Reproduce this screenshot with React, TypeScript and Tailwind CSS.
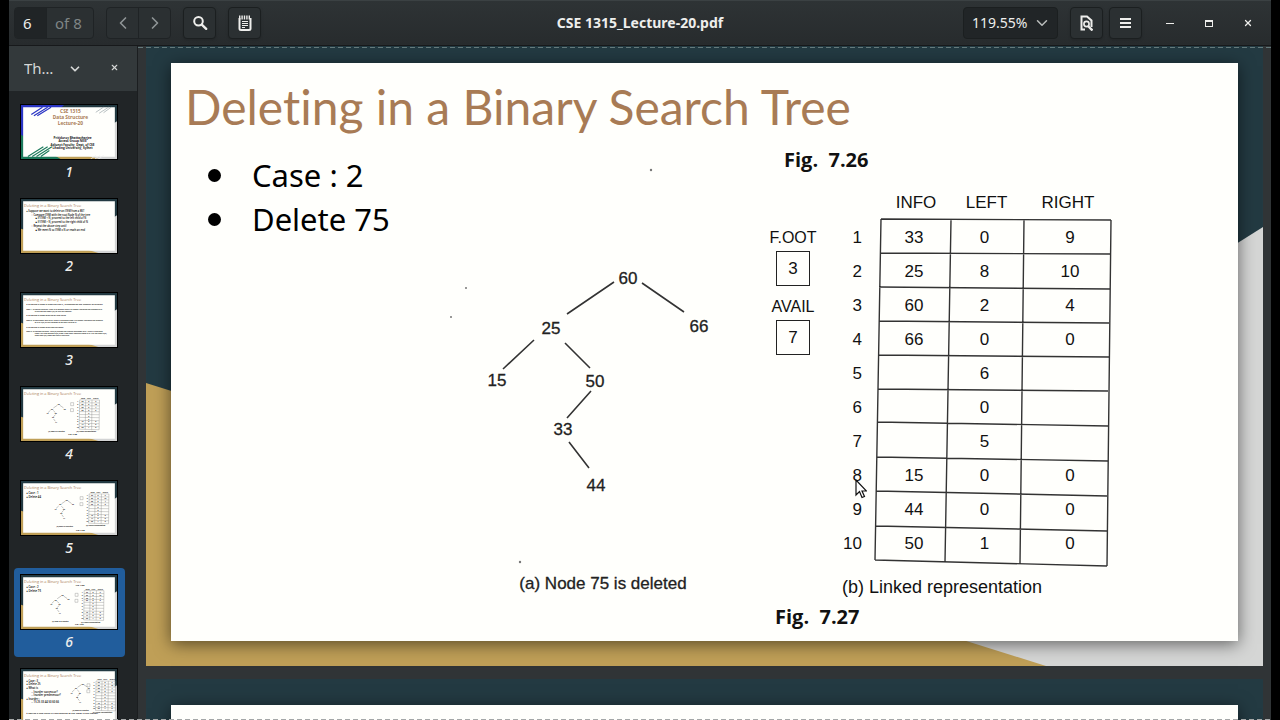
import type { ReactNode } from 'react';
import { ChevronDown, ChevronLeft, ChevronRight, X } from 'lucide-react';

const memory = [
  ['33', '0', '9'],
  ['25', '8', '10'],
  ['60', '2', '4'],
  ['66', '0', '0'],
  ['', '6', ''],
  ['', '0', ''],
  ['', '5', ''],
  ['15', '0', '0'],
  ['44', '0', '0'],
  ['50', '1', '0'],
];

const treeNodes = [
  { x: 188, y: 35, label: '60' },
  { x: 111, y: 85, label: '25' },
  { x: 259, y: 83, label: '66' },
  { x: 57, y: 137, label: '15' },
  { x: 155, y: 138, label: '50' },
  { x: 123, y: 186, label: '33' },
  { x: 156, y: 242, label: '44' },
];

const treeEdges = 'M174 32 127 64M202 33 244 62M94 90 63 119M125 93 150 118M151 141 127 168M129 192 149 218';

// grid lines of the scanned table, which leans a little to the left
const gridLines =
  'M43 0 37 341M113 1 107 343M186 1 182 345M273 1 269 347' +
  'M43 0 273 1M42 34 272 35M41 68 272 70M41 102 271 104M40 136 271 138M40 170 270 172' +
  'M39 203 270 207M39 238 270 242M38 272 269 277M38 307 269 312M37 341 269 347';

const TITLE = 'Deleting in a Binary Search Tree';

/* ---------- Toolbar ---------- */

function ToolButton({ label, children }: { label: string; children: ReactNode }) {
  return (
    <button
      aria-label={label}
      className="flex h-8 w-[33px] items-center justify-center rounded-sm border border-[#1b1f20] bg-[#2b3032] text-[#eeeeec] shadow-sm hover:bg-[#353a3c]"
    >
      {children}
    </button>
  );
}

function Toolbar() {
  return (
    <header className="relative flex h-[46px] shrink-0 items-center justify-between border-t border-b border-t-[#3b4143] border-b-[#17191b] bg-gradient-to-b from-[#2e3335] to-[#272b2d] pr-0.5 pl-[5px]">
      <div className="flex items-center gap-3">
        <label className="flex h-8 w-20 items-center overflow-hidden rounded-sm border border-[#1f2325] bg-[#2b3032] text-[15px] text-[#7f8586]">
          <input
            aria-label="Page"
            defaultValue="6"
            className="h-full w-8 border-r border-[#1f2325] bg-[#202426] pl-2 text-[#eeeeec] outline-none"
          />
          <span className="pl-2">of 8</span>
        </label>
        <div className="flex h-8 w-[65px] rounded-sm border border-[#1f2325] bg-[#2b3032] text-[#8f9596]">
          <button aria-label="Previous page" className="flex flex-1 items-center justify-center border-r border-[#1f2325]">
            <ChevronLeft size={20} />
          </button>
          <button aria-label="Next page" className="flex flex-1 items-center justify-center">
            <ChevronRight size={20} />
          </button>
        </div>
        <ToolButton label="Find">
          <svg width="16" height="16" viewBox="0 0 16 16" fill="none" stroke="currentColor">
            <circle cx="6.5" cy="6.3" r="4.3" strokeWidth="2" />
            <path d="m9.8 9.6 4.4 4.2" strokeWidth="2.4" strokeLinecap="round" />
          </svg>
        </ToolButton>
        <ToolButton label="Annotate">
          <svg width="14" height="16" viewBox="0 0 14 16" fill="none" stroke="currentColor">
            <path d="M1.5 3v10.500q0 1.500 1.500 1.500h8q1.500 0 1.500-1.500V3" strokeWidth="2" />
            <path d="M1 2.500h12" strokeWidth="4" strokeDasharray="1.400 1" />
            <path d="M4 6.500h6M4 8.500h6M4 10.500h6M4 12.500h3" strokeWidth="1" />
          </svg>
        </ToolButton>
      </div>

      <h1 className="pointer-events-none absolute inset-x-0 text-center text-sm font-bold text-[#eeeeec]">
        CSE 1315_Lecture-20.pdf
      </h1>

      <div className="flex items-center text-[#eeeeec]">
        <div className="relative mr-3 h-8 w-[95px]">
          <select
            aria-label="Zoom"
            className="h-full w-full appearance-none rounded-sm border border-[#1b1f20] bg-[#212527] pl-2 text-sm outline-none"
          >
            <option>119.55%</option>
          </select>
          <ChevronDown size={18} className="pointer-events-none absolute top-[7px] right-[7px] text-[#b9bcbb]" />
        </div>
        <ToolButton label="Document properties">
          <svg width="13" height="16" viewBox="0 0 13 16" fill="none" stroke="currentColor">
            <path d="M5 14.500H1.500V1.500H7L11.500 5.500V12" strokeWidth="2" />
            <circle cx="6.500" cy="9" r="2.600" strokeWidth="1.600" />
            <path d="m8 11 4.500 4.500" strokeWidth="2.400" />
          </svg>
        </ToolButton>
        <div className="w-1.5" />
        <ToolButton label="Menu">
          <svg width="11" height="11" viewBox="0 0 11 11" fill="currentColor">
            <path d="M0 0h11v2H0zM0 4h11v2H0zM0 8h11v2H0z" />
          </svg>
        </ToolButton>
        <div className="ml-2.5 flex">
          <button aria-label="Minimize" className="flex h-8 w-[39px] items-center justify-center pr-1">
            <span className="h-px w-2 bg-current" />
          </button>
          <button aria-label="Maximize" className="flex h-8 w-[39px] items-center justify-center pr-1">
            <span className="h-[7px] w-2 border border-t-2 border-current" />
          </button>
          <button aria-label="Close" className="flex h-8 w-[39px] items-center justify-center pr-1">
            <X size={10} strokeWidth={3} />
          </button>
        </div>
      </div>
    </header>
  );
}

/* ---------- Thumbnails ---------- */

function MiniTree({ transform }: { transform: string }) {
  return (
    <g transform={transform}>
      <path d={treeEdges} fill="none" stroke="#555" strokeWidth="4" />
      {treeNodes.map((n) => (
        <text key={n.label} x={n.x} y={n.y} fontSize="20" fontWeight="bold" textAnchor="middle">{n.label}</text>
      ))}
      <text x="163" y="340" fontSize="18" fontWeight="bold" textAnchor="middle">(a) Node 75 is deleted</text>
    </g>
  );
}

function MiniTable({ transform }: { transform: string }) {
  return (
    <g transform={transform} fontSize="20" fontWeight="bold">
      <path d={gridLines} fill="none" stroke="#777" strokeWidth="4" />
      <path d="M-62 32h34v35h-34zM-64 102h34v34h-34z" fill="none" stroke="#777" strokeWidth="4" />
      <text x="58" y="-10">INFO</text>
      <text x="128" y="-10">LEFT</text>
      <text x="202" y="-10">RIGHT</text>
      {memory.map((row, i) => (
        <g key={i} textAnchor="middle">
          <text x="20" y={25 + i * 34}>{i + 1}</text>
          <text x="75" y={25 + i * 34}>{row[0]}</text>
          <text x="147" y={25 + i * 34}>{row[1]}</text>
          <text x="230" y={25 + i * 34}>{row[2]}</text>
        </g>
      ))}
      <text x="5" y="375" fontSize="18">(b) Linked representation</text>
    </g>
  );
}

function MiniLines({ lines, size, gap, y }: { lines: [number, string][]; size: number; gap: number; y: number }) {
  return (
    <>
      {lines.map(([x, text], i) => (
        <text key={i} x={x} y={y + i * gap} fontSize={size} fontWeight="600">{text}</text>
      ))}
    </>
  );
}

function Cover() {
  return (
    <>
      <path d="M0 0h500L0 500z" fill="#2a35c4" />
      <path d="M0 345v283h460z" fill="#1c7a5c" />
      <path d="M25 25h1067v578H25z" fill="#fffffc" />
      <path d="m120 110 130-85M150 125l160-100M190 125l160-100" stroke="#2a35c4" strokeWidth="14" />
      <path d="m870 85 90-60M910 95l110-70M960 90l90-65" stroke="#8b979c" strokeWidth="7" />
      <path d="m80 600 180-115M130 600l180-115M180 600l180-115M230 600l100-70" stroke="#1c7a5c" strokeWidth="13" />
      <path d="m810 628 60-40M860 628l60-40M900 628l60-40" stroke="#eee" strokeWidth="9" />
      <g textAnchor="middle" fontWeight="bold" fill="#a87b55" fontSize="56">
        <text x="575" y="92">CSE 1315</text>
        <text x="575" y="165">Data Structure</text>
        <text x="575" y="235">Lecture-20</text>
      </g>
      <g textAnchor="middle" fontWeight="bold" fill="#222" fontSize="36">
        <text x="600" y="395">Pritidoroy Bhattacharjee</text>
        <text x="600" y="435">Access Group NEIE</text>
        <text x="600" y="473">Adjunct Faculty, Dept. of CSE</text>
        <text x="600" y="513">Leading University, Sylhet</text>
      </g>
    </>
  );
}

function thumbContent(page: number) {
  switch (page) {
    case 2:
      return (
        <MiniLines
          size={29}
          gap={44}
          y={150}
          lines={[
            [60, '●  Suppose we want to delete an ITEM from a BST'],
            [120, '○  Compare ITEM with the root Node N of the tree'],
            [170, '■  If ITEM < N, proceed to the left child of N'],
            [170, '■  If ITEM > N, proceed to the right child of N'],
            [120, '○  Repeat the above step until'],
            [170, '■  We meet N so ITEM = N or reach an end'],
          ]}
        />
      );
    case 3:
      return (
        <>
          <MiniLines
            size={25}
            gap={132}
            y={138}
            lines={[
              [60, '●  To delete a node N from the tree T, it depends on the number of children'],
              [60, '●  To delete a node with no or one child'],
              [60, '●  To delete a node with two children'],
            ]}
          />
          <MiniLines
            size={21}
            gap={24}
            y={200}
            lines={[
              [60, 'Case 1.   N has no children. Then N is deleted from T by simply replacing the location of N'],
              [160, 'in the parent node P(N) by the null pointer.'],
            ]}
          />
          <MiniLines
            size={21}
            gap={24}
            y={320}
            lines={[
              [60, 'Case 2.   N has exactly one child. Then N is deleted from T by simply replacing the location'],
              [160, 'of N in P(N) by the location of the only child of N.'],
            ]}
          />
          <MiniLines
            size={21}
            gap={24}
            y={455}
            lines={[
              [60, 'Case 3.   N has two children. Let S(N) denote the inorder successor of N. Then N is deleted'],
              [160, 'from T by first deleting S(N) from T and then replacing node N in T by the node S(N).'],
              [160, 'Note that S(N) does not have a left child.'],
            ]}
          />
        </>
      );
    case 4:
      return (
        <>
          <MiniTree transform="translate(250 180)" />
          <MiniTable transform="translate(640 150)" />
          <text x="550" y="560" fontSize="26" fontWeight="bold">Fig. 7.25</text>
        </>
      );
    case 5:
      return (
        <>
          <MiniLines size={32} gap={44} y={148} lines={[[60, '●   Case : 1'], [60, '●   Delete 44']]} />
          <MiniTree transform="translate(345 200)" />
          <MiniTable transform="translate(750 150)" />
          <text x="640" y="585" fontSize="26" fontWeight="bold">Fig. 7.26</text>
        </>
      );
    case 6:
      return (
        <>
          <MiniLines size={32} gap={44} y={148} lines={[[60, '●   Case : 2'], [60, '●   Delete 75']]} />
          <text x="638" y="130" fontSize="26" fontWeight="bold">Fig. 7.26</text>
          <MiniTree transform="translate(294 212)" />
          <MiniTable transform="translate(692 181)" />
          <text x="629" y="586" fontSize="26" fontWeight="bold">Fig. 7.27</text>
        </>
      );
    default:
      return (
        <>
          <MiniLines
            size={31}
            gap={42}
            y={148}
            lines={[
              [60, '●   Case : 3'],
              [60, '●   Delete 25'],
              [60, '●   What is'],
              [120, '○   Inorder successor?'],
              [120, '○   Inorder predecessor?'],
              [60, '●   Inorder :'],
              [120, '○   15 25 33 44 50 60 66'],
            ]}
          />
          <text x="60" y="525" fontSize="27" fontWeight="600">●   Storing a new value in right subtree of any Node in the Inorder</text>
          <MiniTree transform="translate(530 150)" />
          <MiniTable transform="translate(830 140)" />
        </>
      );
  }
}

function Thumbnail({ page, selected }: { page: number; selected: boolean }) {
  return (
    <button
      aria-current={selected ? 'page' : undefined}
      className={`flex h-[89px] w-[111px] shrink-0 flex-col items-center rounded-sm pt-1.5 pr-px ${selected ? 'bg-[#215d9c]' : ''}`}
    >
      <svg viewBox="0 0 1117 628" className="h-14 w-[98px] border border-black font-['Open_Sans',sans-serif]">
        <path d="M0 0h1117v628H0z" fill="#233a42" />
        <path d="M1117 189v439H428z" fill="#d3d4d4" />
        <path d="M0 345v283h900z" fill="#bf9f57" />
        {page === 1 ? (
          <Cover />
        ) : (
          <>
            <path d="M25 25h1067v578H25z" fill="#fffffc" />
            <text x="36" y="88" fontSize="45" fontWeight="500" fill="#a87b55">{TITLE}</text>
            {thumbContent(page)}
          </>
        )}
      </svg>
      <span className="text-sm leading-6 font-medium text-[#eeeeec] italic">{page}</span>
    </button>
  );
}

function Sidebar() {
  return (
    <aside className="flex w-[129px] shrink-0 flex-col border-r border-[#1b1e20] bg-[#212527]">
      <div className="flex h-[45px] shrink-0 items-center bg-[#33393b] pb-0.5 pl-[15px] text-[#d5d7d6]">
        <div className="relative w-[62px]">
          <select aria-label="Sidebar view" className="w-full appearance-none bg-transparent text-[15px] outline-none">
            <option>Th…</option>
          </select>
          <ChevronDown size={14} strokeWidth={3} className="pointer-events-none absolute top-1.5 right-1" />
        </div>
        <button aria-label="Close sidebar" className="ml-5 flex h-6 w-4 items-center justify-center">
          <X size={9} strokeWidth={3} />
        </button>
      </div>
      <nav className="flex min-h-0 flex-1 flex-col gap-[5px] overflow-hidden pt-[7px] pl-[5px]">
        {[1, 2, 3, 4, 5, 6, 7].map((page) => (
          <Thumbnail key={page} page={page} selected={page === 6} />
        ))}
      </nav>
    </aside>
  );
}

/* ---------- Document ---------- */

function TreeFigure() {
  return (
    <svg width="300" height="450" viewBox="0 0 300 450" className="mt-[17px] shrink-0">
      <path d={treeEdges} transform="translate(0 100)" fill="none" stroke="#333" strokeWidth="1.600" />
      <g textAnchor="middle" fontSize="17" fill="#222" stroke="#222" strokeWidth="0.300">
        {treeNodes.map((n) => (
          <text key={n.label} x={n.x} y={n.y + 99}>{n.label}</text>
        ))}
        <text x="163" y="439">(a) Node 75 is deleted</text>
      </g>
      {/* scanner dust */}
      <g fill="#777">
        <circle cx="211" cy="20" r="1.200" />
        <circle cx="26" cy="138" r="1" />
        <circle cx="11" cy="167" r="1" />
        <circle cx="80" cy="412" r="1.200" />
      </g>
    </svg>
  );
}

function Pointer({ name, value }: { name: string; value: string }) {
  return (
    <div className="flex flex-col items-center">
      <span className="mb-[3px] text-base leading-5">{name}</span>
      <span className="flex h-[35px] w-[34px] items-center justify-center border border-[#222]">{value}</span>
    </div>
  );
}

function LinkedTable() {
  return (
    <div className="relative ml-[15px]">
      <svg width="271" height="350" viewBox="0 0 271 350" className="pointer-events-none absolute top-8 left-0 overflow-visible">
        <path d={gridLines} fill="none" stroke="#333" strokeWidth="1.400" />
      </svg>
      <table className="w-[271px] table-fixed text-center">
        <thead>
          <tr className="h-8">
            <th className="w-10" />
            <th className="w-[72px] p-0 pl-1 text-center font-normal">INFO</th>
            <th className="w-[73px] p-0 text-center font-normal">LEFT</th>
            <th className="w-[86px] p-0 pl-1 text-center font-normal">RIGHT</th>
          </tr>
        </thead>
        <tbody>
          {memory.map((row, i) => (
            <tr key={i} className="h-[34px]">
              <td className="pt-1 pr-4 pb-0 pl-0 text-right">{i + 1}</td>
              <td className="p-0 pt-1">{row[0]}</td>
              <td className="p-0 pt-1 pr-1">{row[1]}</td>
              <td className="p-0 pt-1 pl-2">{row[2]}</td>
            </tr>
          ))}
        </tbody>
      </table>
      <svg width="12" height="20" viewBox="0 0 12 20" className="absolute top-[292px] left-[17px]">
        <path d="M1 1v15l3.500-3.500 2.500 6 2.500-1-2.500-5.500h4.500z" fill="#fff" stroke="#111" strokeWidth="1.200" />
      </svg>
    </div>
  );
}

function LinkedFigure() {
  return (
    <figure className="w-[400px] shrink-0 pt-[15px]">
      <p className="pl-11 font-['Open_Sans',sans-serif] text-xl leading-6 font-bold">Fig.&nbsp; 7.26</p>
      <div className="mt-[15px] flex pl-[23px]">
        <div className="flex w-[60px] flex-col gap-[11px] pt-[41px]">
          <Pointer name="F.OOT" value="3" />
          <Pointer name="AVAIL" value="7" />
        </div>
        <LinkedTable />
      </div>
      <figcaption className="mt-4 pl-[102px] text-lg leading-6">(b) Linked representation</figcaption>
      <p className="mt-1.5 pl-[35px] font-['Open_Sans',sans-serif] text-xl leading-6 font-bold">Fig.&nbsp; 7.27</p>
    </figure>
  );
}

function Viewer() {
  return (
    <main className="relative min-w-0 flex-1 overflow-hidden bg-[#303436] px-2">
      <section className="relative px-[25px] pt-[17px] pb-[25px]">
        <svg viewBox="0 0 1117 620" preserveAspectRatio="none" className="absolute inset-0 h-full w-full">
          <path d="M0 0h1117v620H0z" fill="#233a42" />
          <path d="M1117 181v439H420z" fill="#d5d6d5" />
          <path d="M0 337v283h900z" fill="#bf9f57" />
        </svg>
        <article className="relative min-h-[578px] bg-[#fffffc] pt-[18px] shadow-[0_3px_16px_rgba(0,0,0,0.55)]">
          <h2 className="pl-3.5 font-[Lato,sans-serif] text-5xl leading-[52px] text-[#a87b55] [font-variant-ligatures:none]">
            {TITLE}
          </h2>
          <div className="flex font-['Liberation_Sans',Arial,sans-serif] text-[17px] text-[#111]">
            <ul className="min-w-0 flex-1 pt-5 pl-[37px] font-['Noto_Sans',sans-serif] text-[31px] leading-[44px] text-black">
              {['Case : 2', 'Delete 75'].map((item) => (
                <li key={item} className="flex items-center whitespace-nowrap">
                  <span className="mr-[31px] size-[13px] rounded-full bg-black" />
                  {item}
                </li>
              ))}
            </ul>
            <TreeFigure />
            <LinkedFigure />
            <div className="w-[98px] shrink-0" />
          </div>
        </article>
      </section>
      <section className="mt-[13px] h-[628px] bg-[#233a42] px-[25px] pt-[26px]">
        <div className="h-[578px] bg-[#fffffc] shadow-[0_3px_16px_rgba(0,0,0,0.55)]" />
      </section>
      <div className="absolute inset-x-0 top-px h-px bg-[repeating-linear-gradient(90deg,#64797b_0_5px,transparent_5px_8px)]" />
    </main>
  );
}

export default function App() {
  return (
    <div className="h-screen bg-black px-[9px] font-['Noto_Sans','Open_Sans',sans-serif]">
      <div className="relative flex h-full flex-col overflow-hidden">
        <Toolbar />
        <div className="flex min-h-0 flex-1">
          <Sidebar />
          <Viewer />
        </div>
        <div className="absolute inset-x-0 bottom-0 h-px bg-[repeating-linear-gradient(90deg,#a5a8a8_0_5px,transparent_5px_8px)]" />
      </div>
    </div>
  );
}
